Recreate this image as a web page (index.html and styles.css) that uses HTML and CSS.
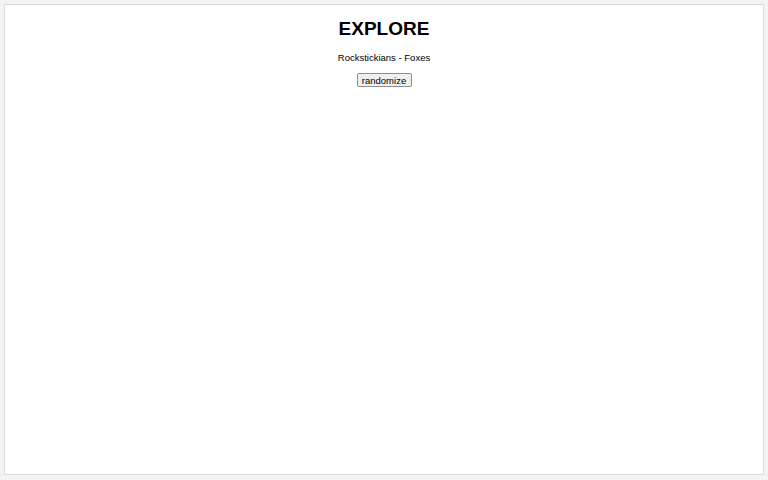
FILE: index.html
```html
<!DOCTYPE html>
<html>
<head>
<meta charset="utf-8">
<link rel="stylesheet" href="styles.css">
</head>
<body>
<div class="frame">
  <h1 class="title">EXPLORE</h1>
  <p class="subtitle">Rockstickians - Foxes</p>
  <button class="btn">randomize</button>
</div>
</body>
</html>
```
FILE: styles.css
```css
html, body { margin: 0; padding: 0; }
body {
  background: #f3f3f3;
  font-family: "Liberation Sans", Arial, sans-serif;
  width: 768px;
  height: 480px;
  padding: 4px 4px 0 4px;
  box-sizing: border-box;
}
.frame {
  background: #fff;
  border: 1px solid #dcdcdc;
  height: 471px;
  box-sizing: border-box;
  display: flex;
  flex-direction: column;
  align-items: center;
  padding-top: 13px;
}
.title {
  margin: 0;
  font-size: 19px;
  font-weight: bold;
  line-height: 22px;
  color: #000;
}
.subtitle {
  margin: 12px 0 0 0;
  font-size: 9.5px;
  line-height: 11px;
  color: #000;
}
.btn {
  margin-top: 10px;
  font-family: "Liberation Sans", Arial, sans-serif;
  font-size: 9.5px;
  line-height: 11px;
  padding: 0 4px;
  border: 1px solid #8f8f8f;
  border-radius: 2px;
  background: #f0f0f0;
  color: #000;
  height: 14px;
  box-sizing: border-box;
  width: 55px;
}
```
